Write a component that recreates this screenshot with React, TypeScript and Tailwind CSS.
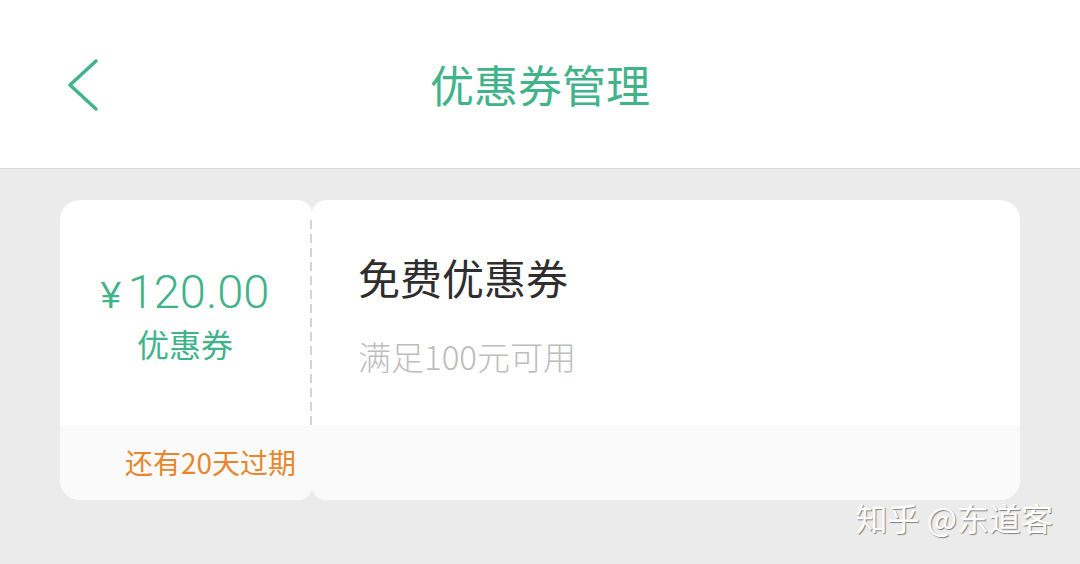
import React from 'react';

const cjk = "font-['Noto_Sans_CJK_SC',sans-serif]";

function BackIcon() {
  return (
    <svg width="34" height="54" viewBox="0 0 34 54" fill="none">
      <path d="M30 3 L4 27 L30 51" stroke="#41b38a" strokeWidth="3.5" strokeLinecap="round" strokeLinejoin="round" />
    </svg>
  );
}

function DashLine() {
  return (
    <svg width="2" height="205" viewBox="0 0 2 205">
      <line x1="1" y1="0" x2="1" y2="205" stroke="#d4d4d4" strokeWidth="2" strokeDasharray="9 5" />
    </svg>
  );
}

export default function App() {
  return (
    <div className={`h-[564px] overflow-hidden bg-[#ebebeb] ${cjk}`}>
      {/* header */}
      <div className="grid h-[169px] grid-cols-[1fr_auto_1fr] items-center border-b border-[#d8d8d8] bg-white">
        <div className="pl-[66px] pt-[2px]">
          <BackIcon />
        </div>
        <h1 className="text-[44px] leading-none text-[#41b38a]">优惠券管理</h1>
        <div />
      </div>

      {/* coupon card */}
      <div className="mx-[60px] mt-[31px] flex h-[300px]">
        <div className="flex w-[252px] flex-col overflow-hidden rounded-l-[20px] rounded-r-[14px] bg-white">
          <div className="flex h-[225px]">
            <div className="flex flex-1 flex-col items-center pt-[68px]">
              <div className="flex items-baseline text-[#41b38a]">
                <span className="mr-[7px] font-['Liberation_Sans',sans-serif] text-[36px] leading-none">¥</span>
                <span className="font-['Roboto',sans-serif] text-[47px] font-light leading-none">120.00</span>
              </div>
              <div className="mt-[12px] text-[32px] leading-none text-[#41b38a]">优惠券</div>
            </div>
            <div className="pt-[20px]">
              <DashLine />
            </div>
          </div>
          <div className="flex flex-1 items-center justify-end bg-[#fafafb] pr-[16px] pb-[2px]">
            <span className="text-[28px] leading-none text-[#e8862c]">还有20天过期</span>
          </div>
        </div>

        <div className="flex flex-1 flex-col overflow-hidden rounded-l-[14px] rounded-r-[20px] bg-white">
          <div className="flex h-[225px] flex-col pl-[46px] pt-[56px]">
            <div className="text-[42px] leading-none text-[#2e2e2e]">免费优惠券</div>
            <div className="mt-[42px] text-[33px] font-light leading-none text-[#bdbdbd]">满足100元可用</div>
          </div>
          <div className="flex-1 bg-[#fafafb]" />
        </div>
      </div>

      {/* watermark */}
      <div className="flex justify-end pr-[27px] pt-[1px]">
        <span className="text-[32px] leading-none text-white [text-shadow:1px_1px_1px_rgba(0,0,0,0.45)]">知乎 @东道客</span>
      </div>
    </div>
  );
}
